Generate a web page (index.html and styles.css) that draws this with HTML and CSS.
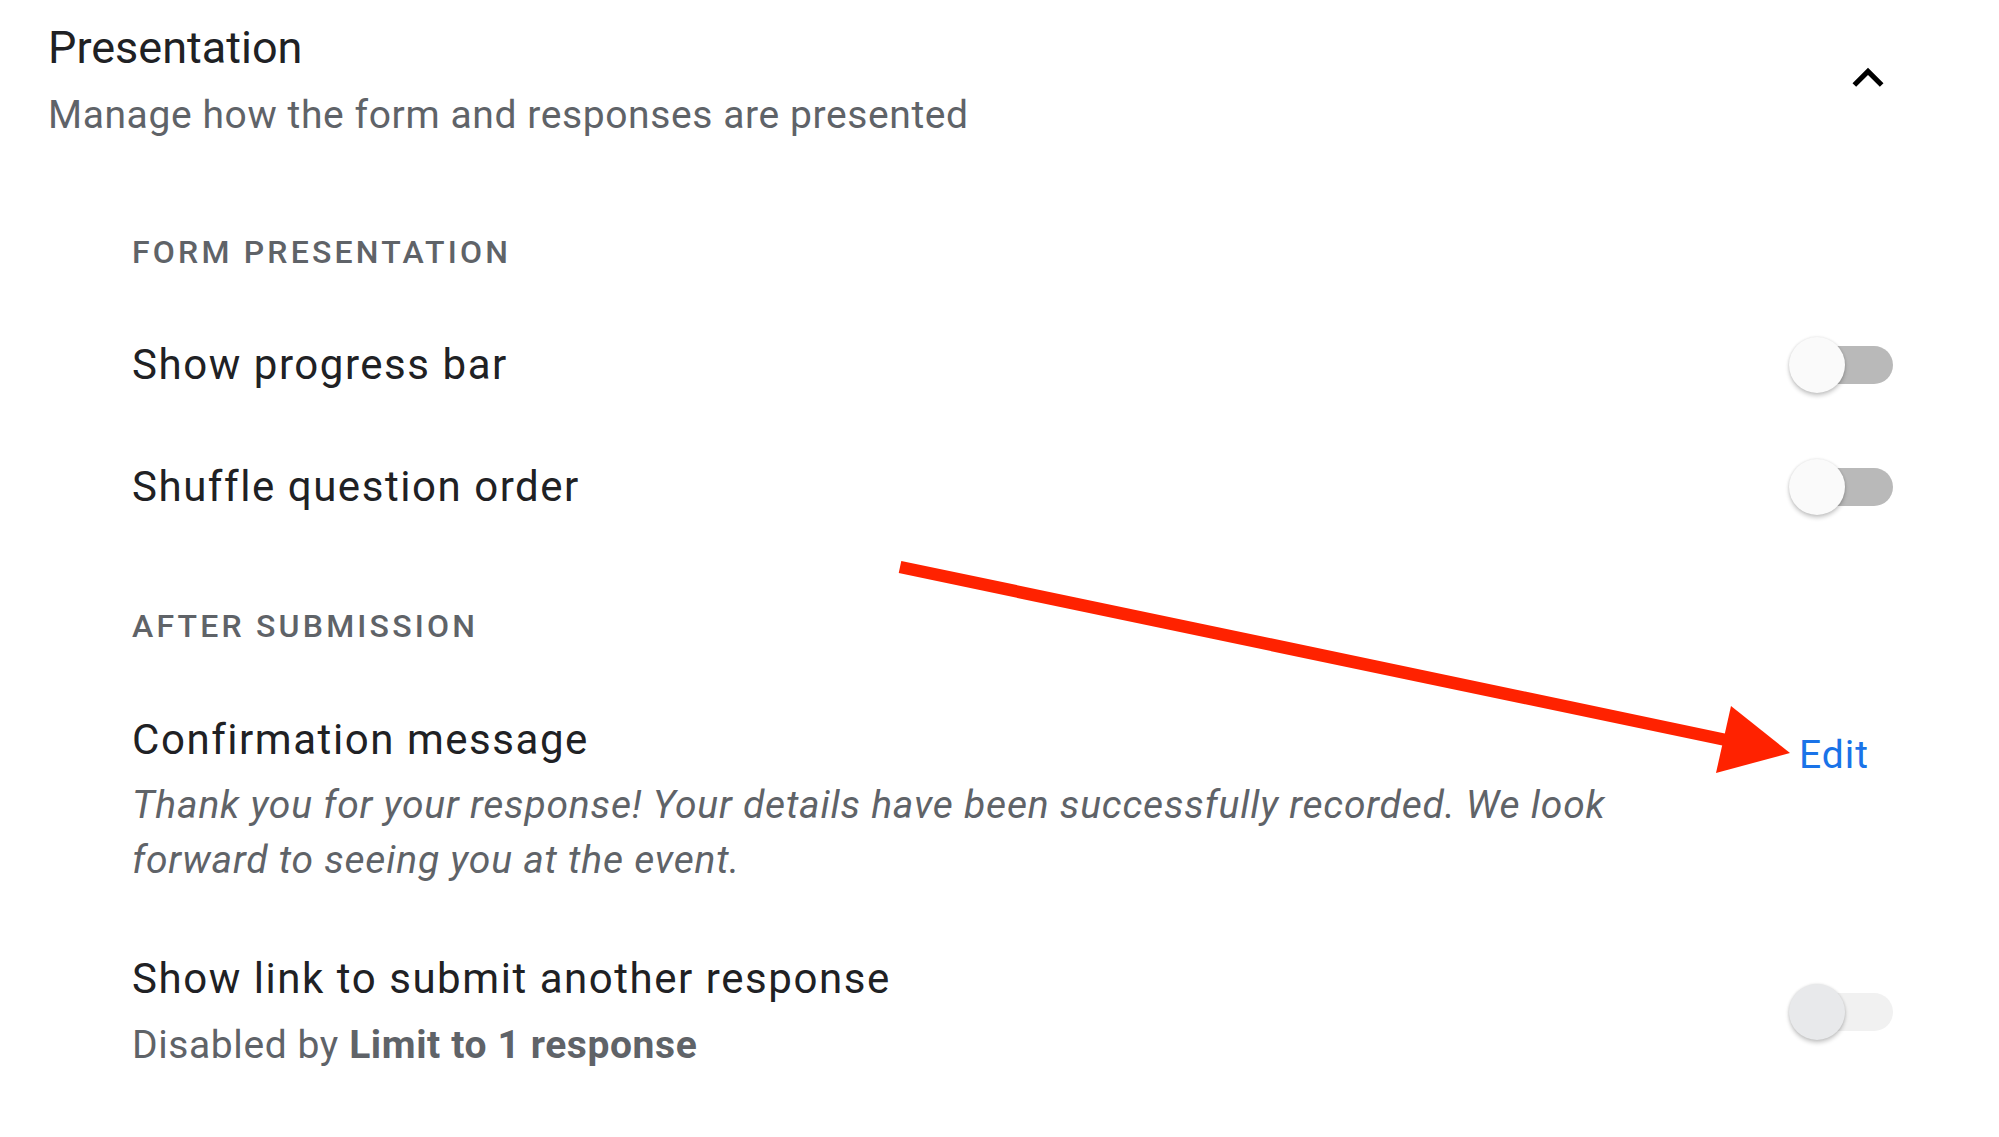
FILE: index.html
```html
<!DOCTYPE html>
<html lang="en">
<head>
<meta charset="utf-8">
<title>Presentation settings</title>
<link rel="stylesheet" href="styles.css">
</head>
<body>
<div class="page">
  <header class="header">
    <div class="header-text">
      <h1 class="title">Presentation</h1>
      <p class="subtitle">Manage how the form and responses are presented</p>
    </div>
    <svg class="chevron" viewBox="0 0 24 24" aria-hidden="true"><path d="M12 8l-6 6 1.41 1.41L12 10.83l4.59 4.58L18 14z"/></svg>
  </header>

  <section class="section">
    <h2 class="section-label first">FORM PRESENTATION</h2>
    <div class="row first-row">
      <span class="row-title">Show progress bar</span>
      <span class="toggle"><span class="track"></span><span class="thumb"></span></span>
    </div>
    <div class="row next-row">
      <span class="row-title">Shuffle question order</span>
      <span class="toggle"><span class="track"></span><span class="thumb"></span></span>
    </div>

    <h2 class="section-label">AFTER SUBMISSION</h2>
    <div class="confirm">
      <div class="confirm-text">
        <div class="row-title">Confirmation message</div>
        <p class="confirm-desc">Thank you for your response! Your details have been successfully recorded. We look forward to seeing you at the event.</p>
      </div>
      <span class="edit">Edit</span>
    </div>
    <div class="row link-row">
      <div class="link-text">
        <div class="row-title">Show link to submit another response</div>
        <div class="row-sub">Disabled by <b>Limit to 1 response</b></div>
      </div>
      <span class="toggle disabled"><span class="track"></span><span class="thumb"></span></span>
    </div>
  </section>
</div>
<svg class="annotation" viewBox="0 0 1999 1137" aria-hidden="true">
  <line x1="900" y1="567" x2="1726" y2="740" stroke="#ff2200" stroke-width="12.5"/>
  <polygon points="1790,753 1731,706 1716,773" fill="#ff2200"/>
</svg>
</body>
</html>
```

FILE: styles.css
```css
html, body {
  margin: 0;
  padding: 0;
  background: #ffffff;
}
body {
  position: relative;
  width: 1999px;
  height: 1137px;
  overflow: hidden;
  font-family: Roboto, "Liberation Sans", Arial, sans-serif;
  color: #202124;
}
.page {
  padding: 22px 100px 0 48px;
}
.header {
  display: flex;
  justify-content: space-between;
  align-items: flex-start;
}
.title {
  margin: 0;
  font-size: 45px;
  line-height: 52px;
  font-weight: 400;
  color: #202124;
}
.subtitle {
  margin: 17px 0 0;
  font-size: 39px;
  line-height: 48px;
  letter-spacing: 0.6px;
  color: #5f6368;
}
.chevron {
  width: 62px;
  height: 62px;
  margin-top: 25px;
  fill: #000000;
  flex: none;
}
.section {
  margin-left: 84px;
  margin-right: 6px;
}
.section-label {
  margin: 91px 0 0;
  font-size: 32px;
  line-height: 40px;
  font-weight: 500;
  letter-spacing: 3.2px;
  color: #5f6368;
}
.section-label.first {
  margin-top: 93px;
}
.row {
  display: flex;
  align-items: center;
  justify-content: space-between;
  min-height: 56px;
}
.first-row {
  margin-top: 65px;
}
.next-row {
  margin-top: 66px;
}
.row-title {
  font-size: 42px;
  line-height: 50px;
  letter-spacing: 1.55px;
  color: #202124;
}
.toggle {
  position: relative;
  flex: none;
  width: 104px;
  height: 56px;
}
.track {
  position: absolute;
  left: 3px;
  top: 9px;
  width: 101px;
  height: 38px;
  border-radius: 19px;
  background: #b9b9b9;
}
.thumb {
  position: absolute;
  left: 0;
  top: 0;
  width: 56px;
  height: 56px;
  border-radius: 50%;
  background: #fafafa;
  box-shadow: 0 3px 4px rgba(0, 0, 0, 0.2), 0 0 3px rgba(0, 0, 0, 0.12);
}
.toggle.disabled .track {
  background: #f1f1f1;
}
.toggle.disabled .thumb {
  background: #e8e9eb;
}
.confirm {
  display: flex;
  align-items: flex-start;
  justify-content: space-between;
  margin-top: 69px;
}
.confirm-text {
  flex: 1;
}
.confirm-desc {
  margin: 13px 0 0;
  max-width: 1560px;
  font-size: 39px;
  line-height: 55px;
  font-style: italic;
  letter-spacing: 0.8px;
  color: #5f6368;
}
.edit {
  flex: none;
  margin: 16px 24px 0 0;
  font-size: 39px;
  line-height: 48px;
  letter-spacing: 1px;
  color: #1a73e8;
}
.link-row {
  margin-top: 66px;
}
.row-sub {
  margin-top: 17px;
  font-size: 39px;
  line-height: 48px;
  letter-spacing: 0.6px;
  color: #5f6368;
}
.row-sub b {
  font-weight: 700;
}
.annotation {
  position: absolute;
  left: 0;
  top: 0;
  width: 1999px;
  height: 1137px;
  pointer-events: none;
}
```
